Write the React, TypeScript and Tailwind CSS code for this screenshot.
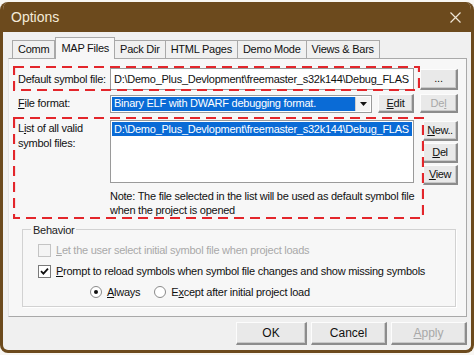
import React from 'react';

const font = { fontFamily: '"Liberation Sans", Arial, sans-serif' };

const Btn: React.FC<{ w: string; h?: string; disabled?: boolean; children: React.ReactNode }> = ({ w, h = 'h-[21px]', disabled, children }) => (
  <div
    className={`${w} ${h} flex items-center justify-center whitespace-nowrap bg-[#e9e9e9] border-t border-l border-t-[#fcfcfc] border-l-[#fcfcfc] border-r-2 border-b-2 border-r-[#8c8c8c] border-b-[#8c8c8c] shadow-[inset_-1px_-1px_0_#c8c8c8] ${disabled ? 'text-[#a8a8a8]' : 'text-[#111]'}`}
  >
    {children}
  </div>
);

const Check: React.FC<{ checked?: boolean; disabled?: boolean }> = ({ checked, disabled }) => (
  <div className={`w-[13px] h-[13px] border ${disabled ? 'border-[#c4c4c4] bg-[#f4f4f4]' : 'border-[#7a7a7a] bg-white'} flex items-center justify-center`}>
    {checked && (
      <svg width="9" height="9" viewBox="0 0 9 9">
        <path d="M1 4.2 L3.4 6.6 L8 1.6" fill="none" stroke="#111" strokeWidth="1.8" />
      </svg>
    )}
  </div>
);

const Radio: React.FC<{ on?: boolean }> = ({ on }) => (
  <div className="w-[12px] h-[12px] rounded-full border border-[#8a8a8a] bg-white flex items-center justify-center">
    {on && <div className="w-[4px] h-[4px] rounded-full bg-[#111]" />}
  </div>
);

const DashBox: React.FC<{ className: string }> = ({ className }) => (
  <svg className={`absolute pointer-events-none ${className}`}>
    <rect x="1" y="1" className="w-[calc(100%-2px)] h-[calc(100%-2px)]" fill="none" stroke="#e3262b" strokeWidth="2.2" strokeDasharray="10 6" />
  </svg>
);

const tabs = ['Comm', 'MAP Files', 'Pack Dir', 'HTML Pages', 'Demo Mode', 'Views & Bars'];
const path = 'D:\\Demo_Plus_Devlopment\\freemaster_s32k144\\Debug_FLAS';

export default function App() {
  return (
    <div className="w-[474px] h-[355px] bg-[#f8f6f2] pt-[2px] text-[11px] tracking-[-0.25px]" style={font}>
      <div className="h-[351px] rounded-[8px] border-[3px] border-t-0 border-[#6c4a1d] bg-[#f0f0f0] overflow-hidden flex flex-col">
        {/* title bar */}
        <div className="h-[30px] bg-[#6c4a1d] flex items-center justify-between pl-[8px] pr-[10px]">
          <span className="text-[14px] tracking-normal text-[#f4ead8]">Options</span>
          <svg width="11" height="11" viewBox="0 0 11 11">
            <path d="M0.5 0.5 L10.5 10.5 M10.5 0.5 L0.5 10.5" stroke="#efe6d6" strokeWidth="1.2" />
          </svg>
        </div>

        <div className="flex-1 pl-[5px] pr-[4px] pt-[5px]">
          {/* tabs */}
          <div className="flex items-end h-[21px] pl-[4px] text-[#111]">
            {tabs.map((t, i) =>
              i === 1 ? (
                <div key={t} className="h-[22px] -mb-px px-[5px] flex items-center bg-[#f7f7f7] border border-b-0 border-[#a9a9a9] z-10">
                  {t}
                </div>
              ) : (
                <div key={t} className="h-[18px] px-[5px] flex items-center border-t border-r border-[#a9a9a9] bg-[#f0f0f0] first:border-l">
                  {t}
                </div>
              )
            )}
          </div>

          {/* panel */}
          <div className="relative h-[259px] bg-[#f7f7f7] border border-[#a9a9a9] border-l-[#e4e4e4] pl-[9px] pt-[9px] text-[#111]">
            <DashBox className="left-[4px] top-[7px] w-[407px] h-[25px]" />
            <DashBox className="left-[4px] top-[58px] w-[411px] h-[102px]" />

            <div className="flex items-center h-[22px]">
              <div className="w-[92px]">Default symbol file:</div>
              <div className="w-[304px] h-[22px] bg-white border border-[#9a9a9a] flex items-center pl-[3px] overflow-hidden whitespace-nowrap">
                {path}
              </div>
              <div className="ml-[6px]">
                <Btn w="w-[38px]">...</Btn>
              </div>
            </div>

            <div className="flex items-center h-[19px] mt-[4px]">
              <div className="w-[92px]">
                <u>F</u>ile format:
              </div>
              <div className="w-[262px] h-[18px] bg-white border border-[#9a9a9a] flex items-center p-[1px]">
                <div className="flex-1 h-full bg-[#0a6bd6] text-white flex items-center pl-[2px] whitespace-nowrap overflow-hidden">
                  Binary ELF with DWARF debugging format.
                </div>
                <div className="w-[15px] h-full flex items-center justify-center bg-[#f2f2f2] border-l border-[#cfcfcf]">
                  <svg width="7" height="4" viewBox="0 0 7 4">
                    <path d="M0 0 H7 L3.5 4 Z" fill="#111" />
                  </svg>
                </div>
              </div>
              <div className="ml-[6px]">
                <Btn w="w-[36px]" h="h-[19px]">
                  <u>E</u>dit
                </Btn>
              </div>
              <div className="ml-[6px]">
                <Btn w="w-[38px]" h="h-[19px]" disabled>
                  De<u>l</u>
                </Btn>
              </div>
            </div>

            <div className="flex mt-[7px]">
              <div className="w-[92px] leading-[15px] pt-[1px]">
                L<u>i</u>st of all valid
                <br />
                symbol files:
              </div>
              <div className="w-[304px] h-[63px] bg-white border border-[#9a9a9a] p-[1px]">
                <div className="h-[14px] bg-[#0a6bd6] text-white flex items-center pl-[2px] whitespace-nowrap overflow-hidden">{path}</div>
              </div>
              <div className="ml-[9px] flex flex-col gap-[2px] pt-[1px] tracking-[-0.4px]">
                <Btn w="w-[35px]" h="h-[20px]">
                  <u>N</u>ew..
                </Btn>
                <Btn w="w-[35px]" h="h-[20px]">
                  <u>D</u>el
                </Btn>
                <Btn w="w-[35px]" h="h-[20px]">
                  <u>V</u>iew
                </Btn>
              </div>
            </div>

            <div className="ml-[92px] mt-[4px] leading-[14px]">
              Note: The file selected in the list will be used as default symbol file
              <br />
              when the project is opened
            </div>

            {/* behavior group */}
            <div className="relative ml-[4px] mt-[12px] w-[434px] h-[78px] border border-[#d2d2d2] shadow-[1px_1px_0_#fff] pl-[15px] pt-[13px]">
              <div className="absolute -top-[8px] left-[8px] px-[2px] bg-[#f7f7f7] text-[#222]">Behavior</div>
              <div className="flex items-center gap-[5px] h-[14px] text-[#a9a9a9]">
                <Check disabled />
                <span>
                  <u>L</u>et the user select initial symbol file when project loads
                </span>
              </div>
              <div className="flex items-center gap-[5px] h-[14px] mt-[7px]">
                <Check checked />
                <span>
                  <u>P</u>rompt to reload symbols when symbol file changes and show missing symbols
                </span>
              </div>
              <div className="flex items-center h-[14px] mt-[7px] pl-[52px]">
                <Radio on />
                <span className="ml-[5px]">
                  <u>A</u>lways
                </span>
                <div className="ml-[14px]">
                  <Radio />
                </div>
                <span className="ml-[5px]">
                  E<u>x</u>cept after initial project load
                </span>
              </div>
            </div>
          </div>

          {/* dialog buttons */}
          <div className="flex justify-end gap-[4px] mt-[5px] text-[12px] tracking-normal">
            <Btn w="w-[71px]" h="h-[23px]">OK</Btn>
            <Btn w="w-[76px]" h="h-[23px]">Cancel</Btn>
            <Btn w="w-[76px]" h="h-[23px]" disabled>
              <u>A</u>pply
            </Btn>
          </div>
        </div>
      </div>
    </div>
  );
}
